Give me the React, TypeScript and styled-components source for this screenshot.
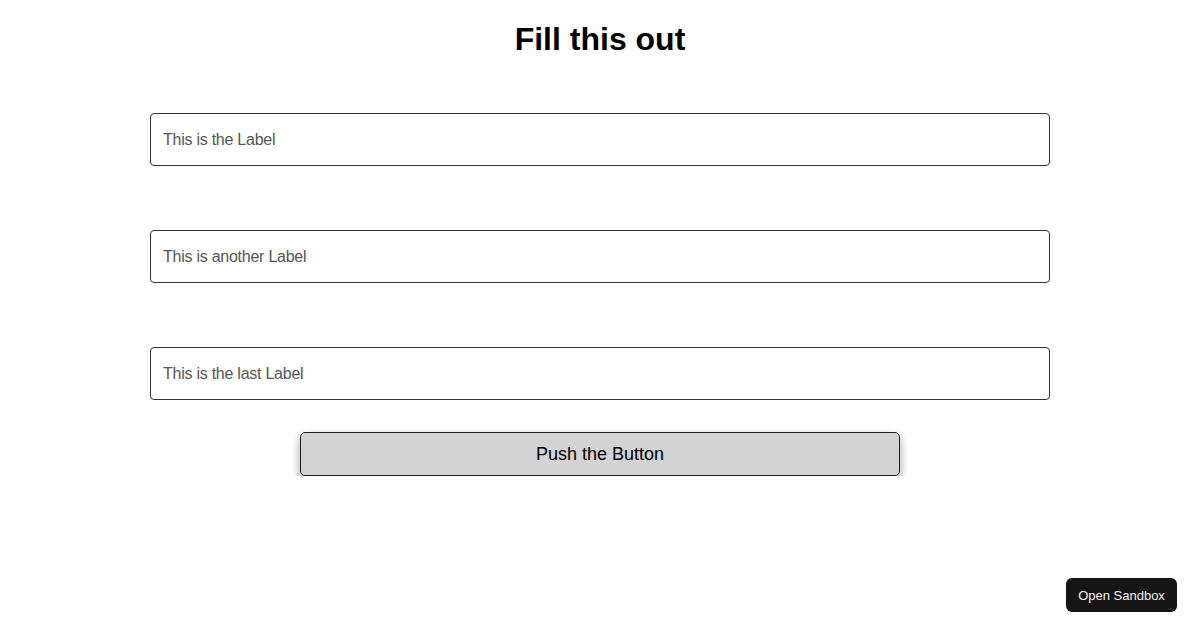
import React from 'react';
import styled, { createGlobalStyle } from 'styled-components';

const GlobalStyle = createGlobalStyle`
  body {
    margin: 0;
    background: #fff;
    font-family: "Liberation Sans", Arial, sans-serif;
  }
`;

const Page = styled.div`
  display: flex;
  flex-direction: column;
  align-items: center;
  padding-top: 21px;
`;

const Title = styled.h1`
  margin: 0;
  font-size: 32px;
  line-height: 37px;
  font-weight: bold;
  color: #000;
`;

const Form = styled.form`
  display: flex;
  flex-direction: column;
  align-items: center;
  width: 900px;
  padding-top: 55px;
`;

const Input = styled.input`
  box-sizing: border-box;
  width: 100%;
  height: 53px;
  padding: 0 12px;
  margin-bottom: 64px;
  font-family: "Liberation Sans", Arial, sans-serif;
  font-size: 16px;
  letter-spacing: -0.25px;
  color: #555;
  border: 1px solid #333;
  border-radius: 4px;
  background: #fff;
  &::placeholder {
    color: #555;
  }
  &:last-of-type {
    margin-bottom: 32px;
  }
`;

const Button = styled.button`
  box-sizing: border-box;
  width: 600px;
  height: 44px;
  font-family: "Liberation Sans", Arial, sans-serif;
  font-size: 18px;
  color: #000;
  background: #d3d3d3;
  border: 1px solid #222;
  border-radius: 5px;
  box-shadow: 0 4px 8px rgba(0, 0, 0, 0.4);
  cursor: pointer;
`;

const SandboxLink = styled.a`
  position: fixed;
  right: 23px;
  bottom: 18px;
  display: flex;
  align-items: center;
  justify-content: center;
  width: 111px;
  height: 34px;
  background: #151515;
  color: #f2f2f2;
  border-radius: 6px;
  font-size: 13px;
  text-decoration: none;
`;

const App = () => {
  return (
    <>
      <GlobalStyle />
      <Page>
        <Title>Fill this out</Title>
        <Form onSubmit={(e) => e.preventDefault()}>
          <Input placeholder="This is the Label" />
          <Input placeholder="This is another Label" />
          <Input placeholder="This is the last Label" />
          <Button type="submit">Push the Button</Button>
        </Form>
      </Page>
      <SandboxLink href="#">Open Sandbox</SandboxLink>
    </>
  );
};

export default App;
